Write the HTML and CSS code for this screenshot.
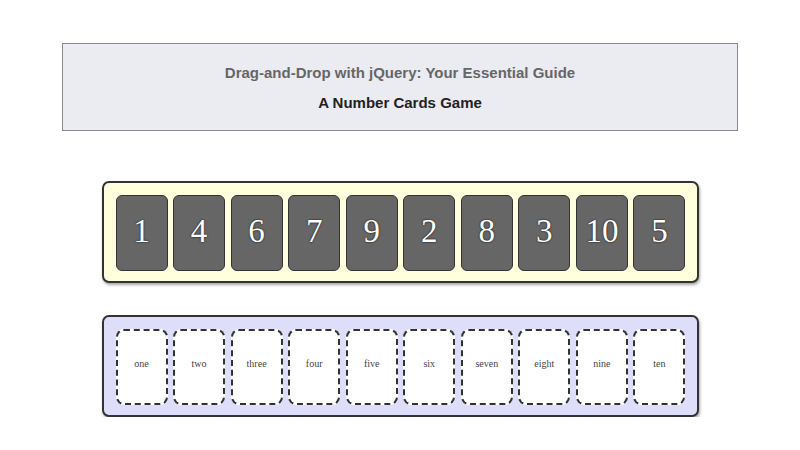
FILE: index.html
```html
<!DOCTYPE html>
<html lang="en">
<head>
<meta charset="utf-8">
<title>A Number Cards Game</title>
<link rel="stylesheet" href="styles.css">
</head>
<body>
  <header class="intro">
    <h1 class="intro-title">Drag-and-Drop with jQuery: Your Essential Guide</h1>
    <h2 class="intro-sub">A Number Cards Game</h2>
  </header>

  <section class="pile">
    <div class="card">1</div>
    <div class="card">4</div>
    <div class="card">6</div>
    <div class="card">7</div>
    <div class="card">9</div>
    <div class="card">2</div>
    <div class="card">8</div>
    <div class="card">3</div>
    <div class="card">10</div>
    <div class="card">5</div>
  </section>

  <section class="slots">
    <div class="slot">one</div>
    <div class="slot">two</div>
    <div class="slot">three</div>
    <div class="slot">four</div>
    <div class="slot">five</div>
    <div class="slot">six</div>
    <div class="slot">seven</div>
    <div class="slot">eight</div>
    <div class="slot">nine</div>
    <div class="slot">ten</div>
  </section>
</body>
</html>
```
FILE: styles.css
```css
html, body {
  margin: 0;
  padding: 0;
  background: #ffffff;
}

body {
  display: flex;
  flex-direction: column;
  align-items: center;
  padding-top: 43px;
  font-family: "Liberation Sans", Arial, sans-serif;
}

.intro {
  box-sizing: border-box;
  width: 676px;
  height: 88px;
  border: 1px solid #8a8a8a;
  background: #ebebf2;
  display: flex;
  flex-direction: column;
  align-items: center;
  padding-top: 19px;
  gap: 11px;
}

.intro-title,
.intro-sub {
  margin: 0;
  font-size: 15px;
  line-height: 19px;
  font-weight: bold;
}

.intro-title { color: #666666; }
.intro-sub { color: #222222; }

.pile,
.slots {
  box-sizing: border-box;
  width: 597px;
  height: 102px;
  border: 2px solid #333333;
  border-radius: 7px;
  box-shadow: 1px 2px 3px rgba(0, 0, 0, 0.35);
  display: flex;
  gap: 5.55px;
  padding: 12px 11px 10px 12px;
}

.pile {
  margin-top: 50px;
  background: #ffffdd;
}

.slots {
  margin-top: 32px;
  background: #dedefb;
}

.card,
.slot {
  box-sizing: border-box;
  width: 52px;
  height: 76px;
  flex: none;
  display: flex;
  align-items: center;
  justify-content: center;
  font-family: "Liberation Serif", "Times New Roman", serif;
}

.card {
  border: 1px solid #333333;
  border-radius: 6px;
  background: #666666;
  color: #ffffff;
  font-size: 33px;
  padding-bottom: 3px;
  text-shadow: 0 0 2px #000000;
}

.slot {
  border: 2px dashed #333333;
  border-radius: 8px;
  background: #ffffff;
  color: #444444;
  font-size: 10px;
  padding-bottom: 8px;
}
```
